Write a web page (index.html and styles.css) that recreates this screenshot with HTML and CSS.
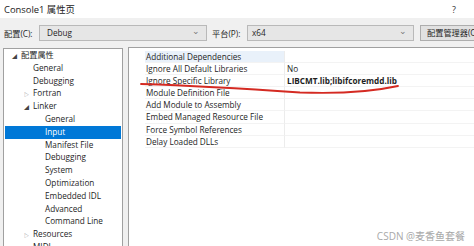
FILE: index.html
```html
<!DOCTYPE html>
<html lang="zh-CN">
<head>
  <meta charset="UTF-8" />
  <title>Console1 属性页</title>
  <link rel="stylesheet" href="styles.css">
</head>
<body>

<div class="window">
  <div class="titlebar">
    <span class="title">Console1 属性页</span>
    <span class="help">?</span>
  </div>

  <div class="toolbar">
    <span class="label">配置(C):</span>
    <div class="combo combo-config">
      <span>Debug</span>
      <span class="chevron">&#8964;</span>
    </div>
    <span class="label label-platform">平台(P):</span>
    <div class="combo combo-platform">
      <span>x64</span>
      <span class="chevron">&#8964;</span>
    </div>
    <div class="btn">配置管理器(C)...</div>
  </div>

  <div class="main">
    <!-- left tree -->
    <div class="tree">
      <div class="node lvl0"><span class="exp">&#9698;</span>配置属性</div>
      <div class="node lvl1">General</div>
      <div class="node lvl1">Debugging</div>
      <div class="node lvl1"><span class="exp closed">&#9655;</span>Fortran</div>
      <div class="node lvl1"><span class="exp">&#9698;</span>Linker</div>
      <div class="node lvl2">General</div>
      <div class="node lvl2 selected">Input</div>
      <div class="node lvl2">Manifest File</div>
      <div class="node lvl2">Debugging</div>
      <div class="node lvl2">System</div>
      <div class="node lvl2">Optimization</div>
      <div class="node lvl2">Embedded IDL</div>
      <div class="node lvl2">Advanced</div>
      <div class="node lvl2">Command Line</div>
      <div class="node lvl1"><span class="exp closed">&#9655;</span>Resources</div>
      <div class="node lvl1"><span class="exp closed">&#9655;</span>MIDL</div>
    </div>

    <!-- property grid -->
    <div class="grid">
      <div class="row current"><span class="name">Additional Dependencies</span><span class="value"></span></div>
      <div class="row"><span class="name">Ignore All Default Libraries</span><span class="value">No</span></div>
      <div class="row"><span class="name">Ignore Specific Library</span><span class="value bold">LIBCMT.lib;libifcoremdd.lib</span></div>
      <div class="row"><span class="name">Module Definition File</span><span class="value"></span></div>
      <div class="row"><span class="name">Add Module to Assembly</span><span class="value"></span></div>
      <div class="row"><span class="name">Embed Managed Resource File</span><span class="value"></span></div>
      <div class="row"><span class="name">Force Symbol References</span><span class="value"></span></div>
      <div class="row"><span class="name">Delay Loaded DLLs</span><span class="value"></span></div>
    </div>
  </div>

  <!-- red pen mark over the screenshot -->
  <svg class="mark" width="474" height="246" viewBox="0 0 474 246">
    <path d="M141 84 C 190 85.5, 250 89, 300 92.5 C 340 94, 375 91, 398 86" fill="none" stroke="#d42a22" stroke-width="1.8" stroke-linecap="round"/>
  </svg>

  <div class="watermark">CSDN @麦香鱼套餐</div>
</div>

</body>
</html>
```

FILE: styles.css
```css
body {
  margin: 0;
  font-family: "Open Sans", "Noto Sans CJK SC", sans-serif;
  font-size: 8.2px;
  color: #1e1e1e;
}

.window {
  position: relative;
  width: 474px;
  height: 246px;
  overflow: hidden;
  background-color: #f0f0f0;
}

.titlebar {
  display: flex;
  justify-content: space-between;
  align-items: center;
  height: 18px;
  padding: 0 18px 0 4px;
  background-color: #ffffff;
}

.title {
  font-size: 9.4px;
  color: #222;
}

.help {
  font-size: 9px;
  color: #333;
}

.toolbar {
  display: flex;
  align-items: center;
  height: 29px;
  padding-left: 4px;
}

.label {
  width: 35px;
  flex: none;
}

.label-platform {
  margin-left: 5px;
  width: 35px;
}

.combo {
  display: flex;
  justify-content: space-between;
  align-items: center;
  height: 16px;
  padding: 0 6px 0 7px;
  box-sizing: border-box;
  background-color: #e6e6e6;
  border: 1px solid #b9b9b9;
  flex: none;
}

.combo-config {
  width: 168px;
}

.combo-platform {
  width: 167px;
  padding-left: 4px;
}

.chevron {
  font-size: 9px;
  color: #777;
  margin-top: -5px;
}

.btn {
  flex: none;
  margin-left: 6px;
  height: 16px;
  line-height: 14px;
  padding: 0 6px;
  box-sizing: border-box;
  border: 1px solid #adadad;
  background-color: #e1e1e1;
  white-space: nowrap;
}

.main {
  display: flex;
  gap: 5px;
  padding-left: 3px;
}

.tree {
  width: 120px;
  height: 200px;
  box-sizing: border-box;
  margin-top: 1px;
  padding: 0 1px;
  background-color: #ffffff;
  border: 1px solid #a0a0a0;
}

.node {
  position: relative;
  height: 12.8px;
  line-height: 12.8px;
  white-space: nowrap;
}

.node.lvl0 { padding-left: 16px; }
.node.lvl1 { padding-left: 28px; }
.node.lvl2 { padding-left: 40px; }

.exp {
  display: inline-block;
  width: 9px;
  margin-left: -9px;
  font-size: 5px;
  color: #444;
}

.exp.closed {
  color: #777;
}

.node.selected {
  background-color: #0078d7;
  color: #ffffff;
}

.grid {
  flex: 1;
  height: 200px;
  padding: 3px 0 0 16px;
  background-color: #ffffff;
  border-left: 1px solid #a0a0a0;
  border-top: 1px solid #a0a0a0;
}

.row {
  display: flex;
  height: 12.1px;
  line-height: 12px;
  white-space: nowrap;
}

.row .name {
  width: 140px;
  padding-left: 1px;
  box-sizing: border-box;
  border-right: 1px solid #ececec;
  border-bottom: 1px solid #f3f3f3;
}

.row .value {
  flex: 1;
  padding-left: 2px;
  border-bottom: 1px solid #f3f3f3;
}

.row.current .name {
  background-color: #e9f1fa;
}

.bold {
  font-weight: bold;
}

.mark {
  position: absolute;
  left: 0;
  top: 0;
}

.watermark {
  position: absolute;
  right: 9px;
  bottom: 3px;
  font-size: 10px;
  color: #a8a8a8;
}
```
